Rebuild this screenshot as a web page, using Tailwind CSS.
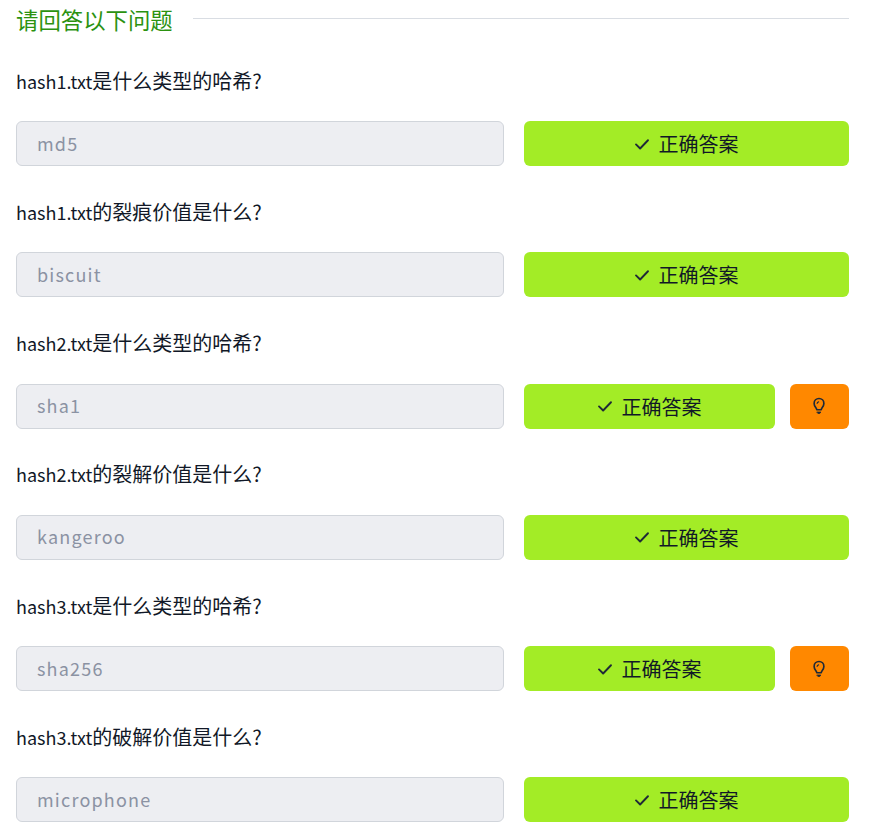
<!DOCTYPE html>
<html>
<head>
    <meta charset="UTF-8">
    <meta name="viewport" content="width=device-width, initial-scale=1.0">
    <title>Questions</title>
    <script src="https://cdn.jsdelivr.net/npm/@tailwindcss/browser@4"></script>
</head>
<body class="bg-white font-['Noto_Sans_CJK_SC','Noto_Sans',sans-serif] text-[#111827]">
    <div class="pl-4 pr-[34px]">
        <div class="flex items-center gap-5 h-[40px]">
            <h2 class="text-[22.4px] leading-[40px] font-normal text-[#2b9210] -mt-[2px]">请回答以下问题</h2>
            <div class="flex-1 border-t border-[#d9dde3] -mt-[4px]"></div>
        </div>

        <div class="pt-[26.6px]">
            <p class="text-[20px] leading-[30px] -translate-y-px"><span class="text-[18px]">hash1.txt</span>是什么类型的哈希?</p>
            <div class="flex gap-5 mt-[24.45px] mb-[31.83px]">
                <input disabled value="md5" class="w-[488px] h-[45px] pl-5 pr-5 pb-[2px] rounded-md border border-[#d1d5db] bg-[#edeef2] text-[18px] tracking-[1.2px] text-[#8b92a3]">
                <button class="flex-1 h-[45px] pr-0.5 flex items-center justify-center gap-2 rounded-md bg-[#a3ec26] text-[20px]">
                    <svg class="w-[18px] h-[18px]" viewBox="0 0 24 24" fill="none" stroke="#1f2937" stroke-width="2.5" stroke-linecap="round" stroke-linejoin="round"><path d="M4 12.5l5.5 5.5L20 7"/></svg>
                    <span class="pt-px">正确答案</span>
                </button>
            </div>

            <p class="text-[20px] leading-[30px] -translate-y-px"><span class="text-[18px]">hash1.txt</span>的裂痕价值是什么?</p>
            <div class="flex gap-5 mt-[24.45px] mb-[31.83px]">
                <input disabled value="biscuit" class="w-[488px] h-[45px] pl-5 pr-5 pb-[2px] rounded-md border border-[#d1d5db] bg-[#edeef2] text-[18px] tracking-[1.2px] text-[#8b92a3]">
                <button class="flex-1 h-[45px] pr-0.5 flex items-center justify-center gap-2 rounded-md bg-[#a3ec26] text-[20px]">
                    <svg class="w-[18px] h-[18px]" viewBox="0 0 24 24" fill="none" stroke="#1f2937" stroke-width="2.5" stroke-linecap="round" stroke-linejoin="round"><path d="M4 12.5l5.5 5.5L20 7"/></svg>
                    <span class="pt-px">正确答案</span>
                </button>
            </div>

            <p class="text-[20px] leading-[30px] -translate-y-px"><span class="text-[18px]">hash2.txt</span>是什么类型的哈希?</p>
            <div class="flex gap-5 mt-[24.45px] mb-[31.83px]">
                <input disabled value="sha1" class="w-[488px] h-[45px] pl-5 pr-5 pb-[2px] rounded-md border border-[#d1d5db] bg-[#edeef2] text-[18px] tracking-[1.2px] text-[#8b92a3]">
                <button class="flex-1 h-[45px] pr-0.5 flex items-center justify-center gap-2 rounded-md bg-[#a3ec26] text-[20px]">
                    <svg class="w-[18px] h-[18px]" viewBox="0 0 24 24" fill="none" stroke="#1f2937" stroke-width="2.5" stroke-linecap="round" stroke-linejoin="round"><path d="M4 12.5l5.5 5.5L20 7"/></svg>
                    <span class="pt-px">正确答案</span>
                </button>
                <button class="w-[59px] h-[45px] -ml-[5px] pr-[2px] flex items-center justify-center rounded-md bg-[#ff8800]">
                    <svg class="w-[18px] h-[18px]" viewBox="0 0 24 24" fill="none" stroke="#1f2937" stroke-width="2.2" stroke-linecap="round" stroke-linejoin="round"><path d="M9 17c0-2.5-3.5-4-3.5-8.500a6.500 6.500 0 0 1 13 0c0 4.500-3.500 6-3.500 8.500z"/><path d="M9.500 20h5l-1.500 2h-2z" fill="#1f2937" stroke-width="1"/><path d="M9.500 8.500a2.500 2.500 0 0 1 2-2" stroke-width="1.500"/></svg>
                </button>
            </div>

            <p class="text-[20px] leading-[30px] -translate-y-px"><span class="text-[18px]">hash2.txt</span>的裂解价值是什么?</p>
            <div class="flex gap-5 mt-[24.45px] mb-[31.83px]">
                <input disabled value="kangeroo" class="w-[488px] h-[45px] pl-5 pr-5 pb-[2px] rounded-md border border-[#d1d5db] bg-[#edeef2] text-[18px] tracking-[1.2px] text-[#8b92a3]">
                <button class="flex-1 h-[45px] pr-0.5 flex items-center justify-center gap-2 rounded-md bg-[#a3ec26] text-[20px]">
                    <svg class="w-[18px] h-[18px]" viewBox="0 0 24 24" fill="none" stroke="#1f2937" stroke-width="2.5" stroke-linecap="round" stroke-linejoin="round"><path d="M4 12.5l5.5 5.5L20 7"/></svg>
                    <span class="pt-px">正确答案</span>
                </button>
            </div>

            <p class="text-[20px] leading-[30px] -translate-y-px"><span class="text-[18px]">hash3.txt</span>是什么类型的哈希?</p>
            <div class="flex gap-5 mt-[24.45px] mb-[31.83px]">
                <input disabled value="sha256" class="w-[488px] h-[45px] pl-5 pr-5 pb-[2px] rounded-md border border-[#d1d5db] bg-[#edeef2] text-[18px] tracking-[1.2px] text-[#8b92a3]">
                <button class="flex-1 h-[45px] pr-0.5 flex items-center justify-center gap-2 rounded-md bg-[#a3ec26] text-[20px]">
                    <svg class="w-[18px] h-[18px]" viewBox="0 0 24 24" fill="none" stroke="#1f2937" stroke-width="2.5" stroke-linecap="round" stroke-linejoin="round"><path d="M4 12.5l5.5 5.5L20 7"/></svg>
                    <span class="pt-px">正确答案</span>
                </button>
                <button class="w-[59px] h-[45px] -ml-[5px] pr-[2px] flex items-center justify-center rounded-md bg-[#ff8800]">
                    <svg class="w-[18px] h-[18px]" viewBox="0 0 24 24" fill="none" stroke="#1f2937" stroke-width="2.2" stroke-linecap="round" stroke-linejoin="round"><path d="M9 17c0-2.5-3.5-4-3.5-8.500a6.500 6.500 0 0 1 13 0c0 4.500-3.500 6-3.500 8.500z"/><path d="M9.500 20h5l-1.500 2h-2z" fill="#1f2937" stroke-width="1"/><path d="M9.500 8.500a2.500 2.500 0 0 1 2-2" stroke-width="1.500"/></svg>
                </button>
            </div>

            <p class="text-[20px] leading-[30px] -translate-y-px"><span class="text-[18px]">hash3.txt</span>的破解价值是什么?</p>
            <div class="flex gap-5 mt-[24.45px]">
                <input disabled value="microphone" class="w-[488px] h-[45px] pl-5 pr-5 pb-[2px] rounded-md border border-[#d1d5db] bg-[#edeef2] text-[18px] tracking-[1.2px] text-[#8b92a3]">
                <button class="flex-1 h-[45px] pr-0.5 flex items-center justify-center gap-2 rounded-md bg-[#a3ec26] text-[20px]">
                    <svg class="w-[18px] h-[18px]" viewBox="0 0 24 24" fill="none" stroke="#1f2937" stroke-width="2.5" stroke-linecap="round" stroke-linejoin="round"><path d="M4 12.5l5.5 5.5L20 7"/></svg>
                    <span class="pt-px">正确答案</span>
                </button>
            </div>
        </div>
    </div>
</body>
</html>
